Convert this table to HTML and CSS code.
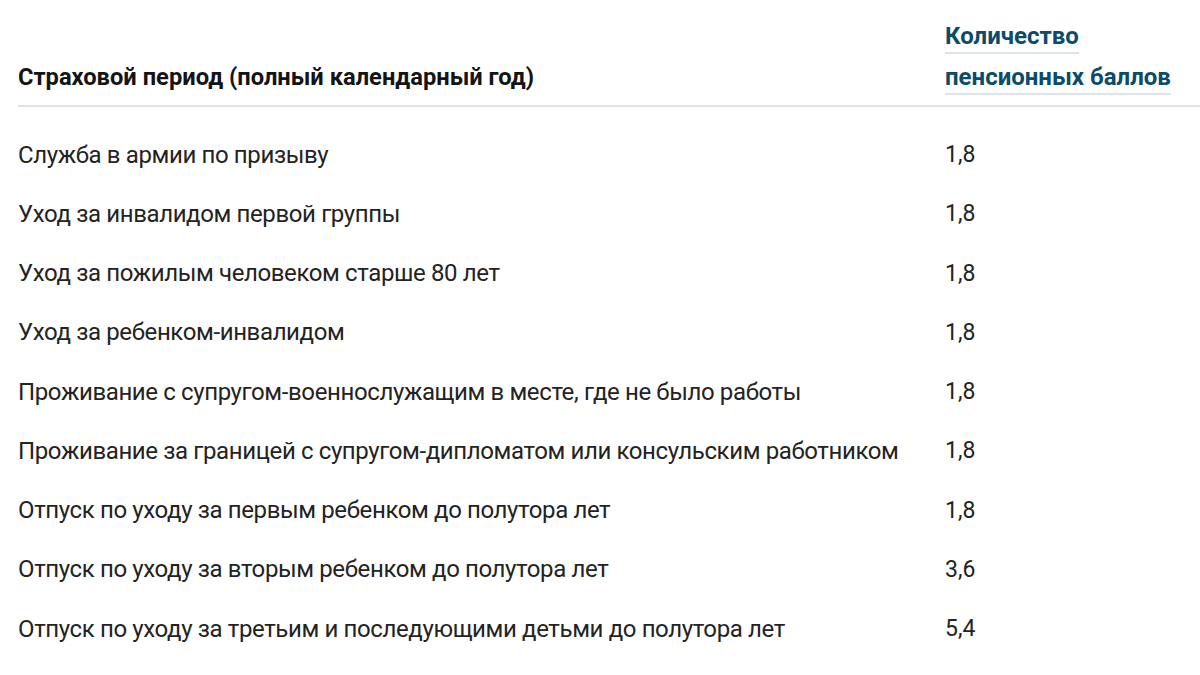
FILE: index.html
```html
<!DOCTYPE html>
<html lang="ru">
<head>
<meta charset="utf-8">
<link rel="stylesheet" href="styles.css">
</head>
<body>
<div class="table">
  <div class="head">
    <div class="h1">Страховой период (полный календарный год)</div>
    <div class="h2"><span class="term">Количество пенсионных баллов</span></div>
  </div>
  <div class="row"><div class="c1">Служба в армии по призыву</div><div class="c2">1,8</div></div>
  <div class="row"><div class="c1">Уход за инвалидом первой группы</div><div class="c2">1,8</div></div>
  <div class="row"><div class="c1">Уход за пожилым человеком старше 80 лет</div><div class="c2">1,8</div></div>
  <div class="row"><div class="c1">Уход за ребенком-инвалидом</div><div class="c2">1,8</div></div>
  <div class="row"><div class="c1">Проживание с супругом-военнослужащим в месте, где не было работы</div><div class="c2">1,8</div></div>
  <div class="row"><div class="c1">Проживание за границей с супругом-дипломатом или консульским работником</div><div class="c2">1,8</div></div>
  <div class="row"><div class="c1">Отпуск по уходу за первым ребенком до полутора лет</div><div class="c2">1,8</div></div>
  <div class="row"><div class="c1">Отпуск по уходу за вторым ребенком до полутора лет</div><div class="c2">3,6</div></div>
  <div class="row"><div class="c1">Отпуск по уходу за третьим и последующими детьми до полутора лет</div><div class="c2">5,4</div></div>
</div>
</body>
</html>
```
FILE: styles.css
```css
html, body {
  margin: 0;
  padding: 0;
  background: #fff;
}
body {
  font-family: Roboto, "Liberation Sans", sans-serif;
  color: #222;
}
.table {
  padding-left: 18px;
  padding-top: 16px;
}
.head {
  display: grid;
  grid-template-columns: 927px 1fr;
  align-items: end;
  border-bottom: 2px solid #e2e2e2;
  padding-bottom: 7px;
}
.h1 {
  font-weight: 700;
  font-size: 23.7px;
  line-height: 41px;
  color: #141414;
}
.h2 {
  font-weight: 700;
  font-size: 24px;
  line-height: 41px;
  color: #0b4c6c;
  width: 250px;
}
.term {
  border-bottom: 2px solid #dde5ec;
  padding-bottom: 2px;
}
.row {
  display: grid;
  grid-template-columns: 927px 1fr;
  height: 59.25px;
  align-items: center;
  font-size: 24px;
  letter-spacing: -0.38px;
  color: #232323;
}
.c2 {
  letter-spacing: 0;
  font-size: 23px;
}
.head + .row {
  margin-top: 18px;
}
```
